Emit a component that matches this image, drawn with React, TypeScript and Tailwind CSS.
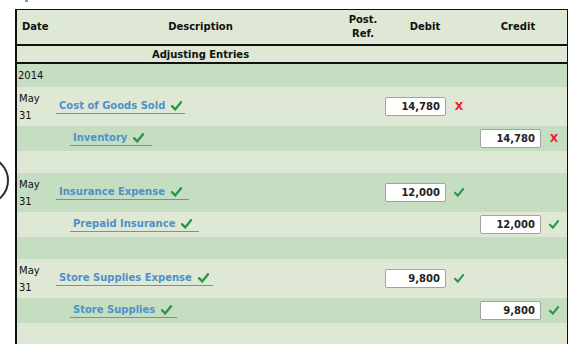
import React from "react";

type Mark = "ok" | "bad";

const entries = [
  {
    debit: { account: "Cost of Goods Sold", width: "w-[129px]", amount: "14,780", mark: "bad" as Mark },
    credit: { account: "Inventory", width: "w-[82px]", amount: "14,780", mark: "bad" as Mark },
  },
  {
    debit: { account: "Insurance Expense", width: "w-[133px]", amount: "12,000", mark: "ok" as Mark },
    credit: { account: "Prepaid Insurance", width: "w-[129px]", amount: "12,000", mark: "ok" as Mark },
  },
  {
    debit: { account: "Store Supplies Expense", width: "w-[157px]", amount: "9,800", mark: "ok" as Mark },
    credit: { account: "Store Supplies", width: "w-[107px]", amount: "9,800", mark: "ok" as Mark },
  },
];

const row = "grid grid-cols-[39px_289px_36px_88px_1fr]";
const light = "bg-[#dee8d4]";
const dark = "bg-[#c5ddc1]";

function Check({ small }: { small?: boolean }) {
  return (
    <svg width={small ? 10 : 11} height={small ? 9 : 10} viewBox="0 0 11 10" className="shrink-0">
      <path d="M1 5.2 L4.2 8.4 L10 1.2" fill="none" stroke="#2a9646" strokeWidth="2.4" strokeLinecap="round" />
    </svg>
  );
}

function Cross() {
  return (
    <span className="text-[11px] leading-none font-bold text-[#ee1c2c]">X</span>
  );
}

function Account({ name, width, indent }: { name: string; width: string; indent?: boolean }) {
  return (
    <div
      className={`${width} ${indent ? "ml-[14px]" : ""} flex items-center gap-[6px] border-b border-[#5b97cf] pl-[3px] pb-px text-[10px] leading-[12px] font-bold text-[#4f90c9]`}
    >
      <span>{name}</span>
      <Check />
    </div>
  );
}

function Amount({ value, mark }: { value: string; mark: Mark }) {
  return (
    <div className="flex items-center">
      <div className="flex h-[19px] w-[61px] items-center justify-end rounded-[2px] border border-[#a3a3a3] bg-white pr-[5px] text-[10px] font-bold text-[#222]">
        {value}
      </div>
      <div className="ml-[8px] flex w-[10px] justify-center">
        {mark === "ok" ? <Check small /> : <Cross />}
      </div>
    </div>
  );
}

export default function App() {
  let shade = 0;
  const next = () => (shade++ % 2 === 0 ? dark : light);

  return (
    <div
      className="relative h-[344px] w-[582px] overflow-hidden bg-white text-[#111]"
      style={{ fontFamily: '"DejaVu Sans", Verdana, sans-serif' }}
    >
      {/* bits of neighbouring page content */}
      <div className="absolute left-[25px] top-0 h-[2px] w-[3px] bg-[#6aa0d8]" />
      <div className="absolute left-[-40px] top-[156px] h-[49px] w-[49px] rounded-full border-2 border-[#2a2a2a]" />

      <div className="ml-[15px] mt-[9px] w-[553px] border-l-2 border-r border-t border-[#111]">
        <div className={`${row} ${light} h-[36px] border-b-2 border-[#111] pb-[2px] text-[10px] font-bold`}>
          <div className="flex items-center pl-[5px]">Date</div>
          <div className="flex items-center justify-center">Description</div>
          <div className="flex flex-col items-center justify-center pt-[2px] leading-[14px]">
            <span>Post.</span>
            <span>Ref.</span>
          </div>
          <div className="flex items-center justify-center">Debit</div>
          <div className="flex items-center justify-center">Credit</div>
        </div>

        <div className={`${row} ${light} h-[18px] border-b-2 border-[#111] text-[10px] font-bold`}>
          <div />
          <div className="flex items-center justify-center">Adjusting Entries</div>
        </div>

        <div className={`${next()} flex h-[23px] items-center pl-[1px] text-[10px]`}>2014</div>

        {entries.map((e, i) => (
          <div key={i}>
            <div className={`${row} ${next()} h-[39px]`}>
              <div className="flex flex-col pl-[2px] pt-[3px] text-[10px] leading-[17px]">
                <span>May</span>
                <span>31</span>
              </div>
              <div className="flex items-center">
                <Account name={e.debit.account} width={e.debit.width} />
              </div>
              <div />
              <div className="flex items-center pl-[4px]">
                <Amount value={e.debit.amount} mark={e.debit.mark} />
              </div>
              <div />
            </div>
            <div className={`${row} ${next()} h-[25px]`}>
              <div />
              <div className="flex items-center">
                <Account name={e.credit.account} width={e.credit.width} indent />
              </div>
              <div />
              <div />
              <div className="flex items-center pl-[11px]">
                <Amount value={e.credit.amount} mark={e.credit.mark} />
              </div>
            </div>
            <div className={`${next()} h-[22px]`} />
          </div>
        ))}
      </div>
    </div>
  );
}
